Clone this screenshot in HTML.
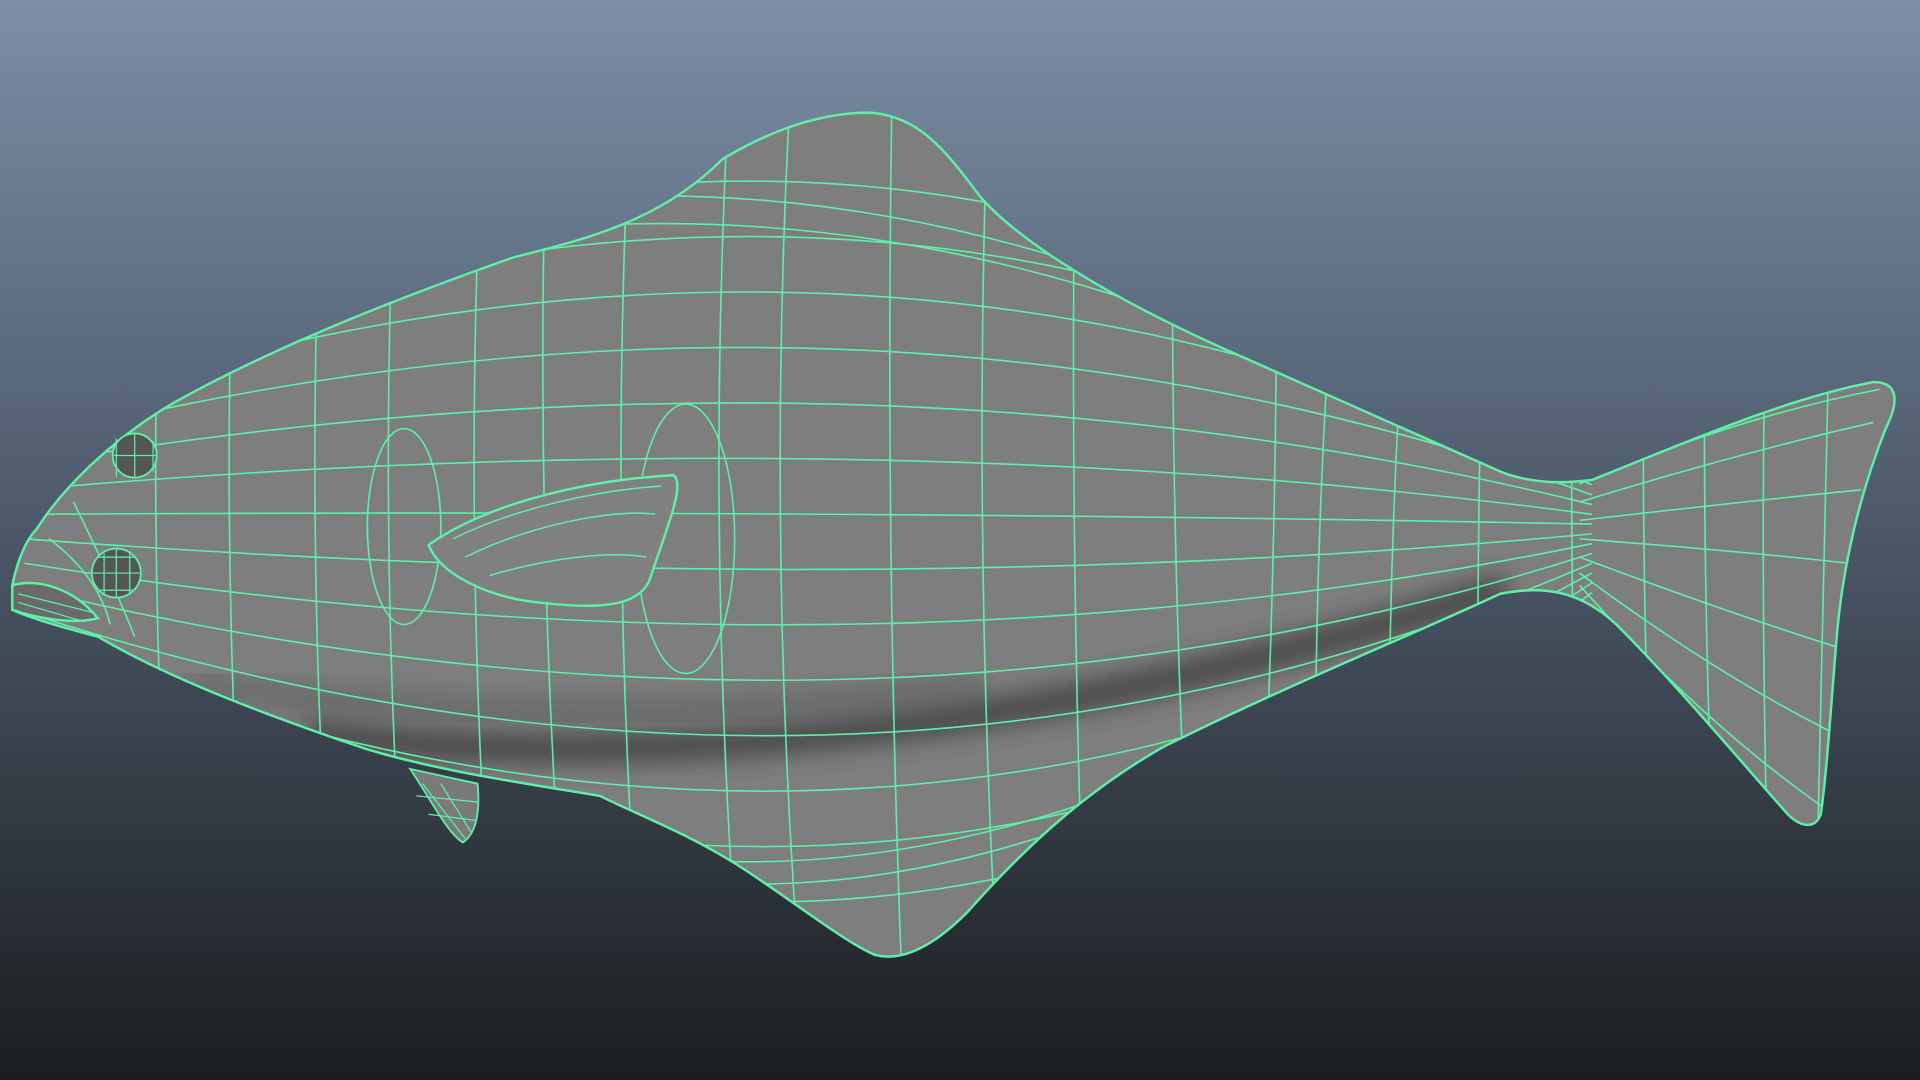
<!DOCTYPE html>
<html><head><meta charset="utf-8"><style>
html,body{margin:0;padding:0;width:1920px;height:1080px;overflow:hidden;background:#2a2f36}
svg{display:block}
</style></head><body>
<svg width="1920" height="1080" viewBox="0 0 1568 882" preserveAspectRatio="none" xmlns="http://www.w3.org/2000/svg">
<defs>
<linearGradient id="bg" x1="0" y1="0" x2="0" y2="1">
<stop offset="0" stop-color="#7c8ea5"/>
<stop offset="0.45" stop-color="#4f5d6e"/>
<stop offset="1" stop-color="#1b1d20"/>
</linearGradient>
<filter id="bl" x="-20%" y="-50%" width="140%" height="200%"><feGaussianBlur stdDeviation="10"/></filter>
<clipPath id="fc"><path id="fish" d="M10,478 C15,455 22,440 30,432 C50,400 90,360 140,330 C220,285 320,245 420,210 C480,195 540,180 590,130 C640,100 680,92 710,92 C750,95 770,120 800,160 C830,195 900,240 1000,285 C1100,330 1180,365 1225,385 C1250,395 1275,395 1300,392 C1380,360 1460,325 1530,312 C1552,312 1550,330 1540,350 C1520,400 1505,460 1500,520 C1495,580 1492,630 1487,665 C1482,678 1470,675 1460,665 C1420,620 1370,560 1320,510 C1290,482 1260,478 1225,485 C1150,520 1050,560 950,610 C880,650 830,700 790,745 C760,775 735,785 715,780 C690,770 640,730 600,705 C560,680 520,665 490,650 C430,640 360,630 300,612 C220,585 140,555 80,520 C50,512 25,505 10,498 Z"/></clipPath>
</defs>
<rect width="1568" height="882" fill="url(#bg)"/>
<use href="#fish" fill="#7e7e7e"/>
<g clip-path="url(#fc)">
<path d="M250,600 Q700,650 1230,480" fill="none" stroke="#3c3c3c" stroke-width="22" filter="url(#bl)" opacity="0.9"/>
<path d="M150,560 Q500,600 800,560" fill="none" stroke="#555" stroke-width="20" filter="url(#bl)" opacity="0.5"/>
</g>
<g clip-path="url(#fc)" fill="none" stroke="#5ef0aa" stroke-width="1.3">
<path d="M20,300 Q700,-40 1300,380"/>
<path d="M20,320 Q700,36 1300,388"/>
<path d="M20,340 Q700,112 1300,396"/>
<path d="M20,360 Q700,188 1300,404"/>
<path d="M20,380 Q700,264 1300,412"/>
<path d="M20,400 Q700,340 1300,420"/>
<path d="M20,420 Q700,416 1300,428"/>
<path d="M20,440 Q700,492 1300,436"/>
<path d="M20,460 Q700,568 1300,444"/>
<path d="M20,480 Q700,644 1300,452"/>
<path d="M20,500 Q700,720 1300,460"/>
<path d="M20,520 Q700,796 1300,468"/>
<path d="M20,540 Q700,872 1300,476"/>
<path d="M20,560 Q700,948 1300,484"/>
<path d="M200,215 Q700,50 1230,380"/>
<path d="M200,235 Q700,80 1230,383"/>
<path d="M300,640 Q700,860 1220,490"/>
<path d="M300,630 Q700,830 1220,488"/>
<path d="M140,0 Q110,440 150,882"/>
<path d="M200,0 Q170,440 210,882"/>
<path d="M270,0 Q240,440 280,882"/>
<path d="M330,0 Q300,440 340,882"/>
<path d="M400,0 Q370,440 410,882"/>
<path d="M450,0 Q430,440 470,882"/>
<path d="M520,0 Q490,440 530,882"/>
<path d="M600,0 Q570,440 610,882"/>
<path d="M650,0 Q620,440 660,882"/>
<path d="M730,0 Q720,440 740,882"/>
<path d="M810,0 Q790,440 820,882"/>
<path d="M880,0 Q870,440 890,882"/>
<path d="M960,0 Q950,440 980,882"/>
<path d="M1040,0 Q1050,440 1020,882"/>
<path d="M1110,0 Q1060,440 1080,882"/>
<path d="M1170,0 Q1120,440 1140,882"/>
<path d="M1220,0 Q1200,440 1210,882"/>
<path d="M1285,0 Q1280,440 1290,882"/>
<path d="M1290,395 Q1420,340 1535,318"/>
<path d="M1290,410 Q1420,370 1530,345"/>
<path d="M1290,425 Q1420,410 1520,400"/>
<path d="M1290,440 Q1420,450 1510,460"/>
<path d="M1290,455 Q1410,500 1505,530"/>
<path d="M1290,468 Q1400,550 1500,600"/>
<path d="M1290,478 Q1390,590 1490,660"/>
<path d="M1350,0 Q1330,440 1360,882"/>
<path d="M1400,0 Q1380,440 1410,882"/>
<path d="M1450,0 Q1430,440 1450,882"/>
<path d="M1500,0 Q1490,440 1480,882"/>
<ellipse cx="330" cy="430" rx="30" ry="80"/>
<ellipse cx="560" cy="440" rx="40" ry="110"/>
<path d="M40,440 Q80,470 90,510"/><path d="M60,410 Q90,470 110,520"/>
</g>
<use href="#fish" fill="none" stroke="#5ef0aa" stroke-width="2"/>
<path d="M350,445 C400,410 480,392 550,388 C560,395 545,430 530,475 C520,495 490,498 440,492 C400,488 360,470 350,445 Z" fill="#808080" stroke="#5ef0aa" stroke-width="2"/>
<path d="M370,440 C420,415 490,400 540,397 M380,455 C430,430 500,415 535,420 M400,470 C450,455 500,450 528,455" fill="none" stroke="#5ef0aa" stroke-width="1.2"/>
<path d="M335,628 C350,650 365,680 378,688 C390,680 392,660 390,640 Z" fill="#7a7a7a" stroke="#5ef0aa" stroke-width="1.5"/>
<path d="M345,640 L380,685 M360,640 L385,680 M340,650 L390,655 M350,665 L388,670" stroke="#5ef0aa" stroke-width="1"/>
<circle cx="110" cy="372" r="18" fill="#555" stroke="#5ef0aa" stroke-width="1.5"/>
<circle cx="95" cy="468" r="20" fill="#555" stroke="#5ef0aa" stroke-width="1.5"/>
<path d="M95,358 L95,390 M110,354 L110,390 M125,360 L125,385 M93,372 L128,372 M80,455 L110,455 M76,468 L114,468 M80,482 L110,482 M95,448 L95,488 M85,452 L85,485 M106,452 L106,485" stroke="#5ef0aa" stroke-width="1"/>
<path d="M10,478 C30,472 60,480 80,505 C60,510 30,505 10,498 Z" fill="#6a6a6a" stroke="#5ef0aa" stroke-width="2"/>
<path d="M15,485 L75,500 M15,492 L70,508" stroke="#5ef0aa" stroke-width="1"/>
</svg>
</body></html>
